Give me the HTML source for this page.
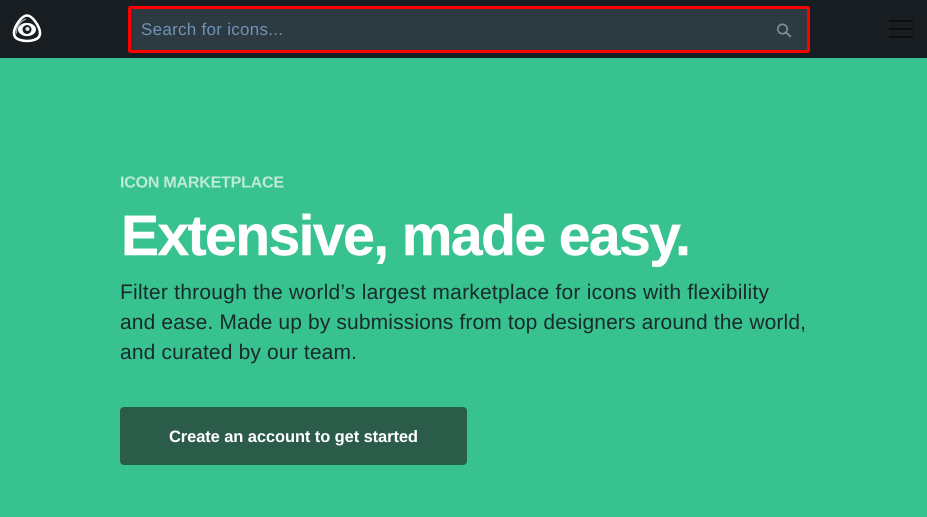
<!DOCTYPE html>
<html lang="en">
<head>
<meta charset="utf-8">
<title>Icon Marketplace</title>
<style>
html,body{margin:0;padding:0;width:927px;height:517px;overflow:hidden;background:#38c28f}
svg{display:block;position:absolute;left:0;top:0}
text{font-family:"Liberation Sans",sans-serif;text-rendering:geometricPrecision}
</style>
</head>
<body>
<svg width="927" height="517" viewBox="0 0 927 517" xmlns="http://www.w3.org/2000/svg">
  <rect width="927" height="517" fill="#38c28f"/>
  <rect width="927" height="58" fill="#181d22"/>

  <!-- logo -->
  <path d="M27 15.500c3 0 5 1.800 7.500 5c2.800 3.600 5.500 8 5.500 12.500c0 3.800-2.400 5.800-5.500 6.800c-2.500.8-5 1.200-7.500 1.200s-5-.4-7.500-1.200c-3.100-1-5.500-3-5.500-6.800c0-4.500 2.700-8.900 5.500-12.500c2.500-3.200 4.500-5 7.500-5z" fill="none" stroke="#fff" stroke-width="2.600"/>
  <path d="M16.500 33.500c-.5-6 3.500-12.500 9.500-14.500" fill="none" stroke="#a9adb0" stroke-width="1.200"/>
  <ellipse cx="27" cy="29.500" rx="9" ry="6.600" fill="#fff"/>
  <circle cx="27" cy="29.500" r="4.500" fill="#181d22"/>
  <circle cx="27.500" cy="29" r="2" fill="#e4e5e6"/>

  <!-- search -->
  <rect x="129.500" y="7.500" width="679" height="44" rx="1" fill="#2e3a42" stroke="#fe0000" stroke-width="3"/>
  <text x="141" y="35" font-size="17" fill="#6f93b5" textLength="142" lengthAdjust="spacing">Search for icons...</text>
  <circle cx="782.500" cy="29" r="4.700" fill="none" stroke="#7f909e" stroke-width="1.600"/>
  <path d="M786 32.500L790.800 36.800" stroke="#7f909e" stroke-width="1.800" fill="none"/>

  <!-- menu -->
  <rect x="889" y="20" width="24" height="2" fill="#0b0e11"/>
  <rect x="889" y="28" width="24" height="2" fill="#0b0e11"/>
  <rect x="889" y="36" width="24" height="2" fill="#0b0e11"/>

  <!-- hero -->
  <text x="120" y="187.500" font-size="16" font-weight="700" fill="#bdebd8" textLength="164" lengthAdjust="spacing">ICON MARKETPLACE</text>
  <text x="121" y="255" font-size="57" font-weight="700" fill="#fff" stroke="#fff" stroke-width=".4" textLength="570" lengthAdjust="spacing">Extensive, made easy.</text>

  <g font-size="21" fill="#182a2c">
    <text x="120" y="299" textLength="649" lengthAdjust="spacing">Filter through the world’s largest marketplace for icons with flexibility</text>
    <text x="120" y="329" textLength="686" lengthAdjust="spacing">and ease. Made up by submissions from top designers around the world,</text>
    <text x="120" y="359" textLength="237" lengthAdjust="spacing">and curated by our team.</text>
  </g>

  <!-- button -->
  <rect x="120" y="407" width="347" height="58" rx="4" fill="#2b5c4a"/>
  <text x="169" y="442" font-size="16.500" font-weight="700" fill="#fff" textLength="249" lengthAdjust="spacing">Create an account to get started</text>
</svg>
</body>
</html>
